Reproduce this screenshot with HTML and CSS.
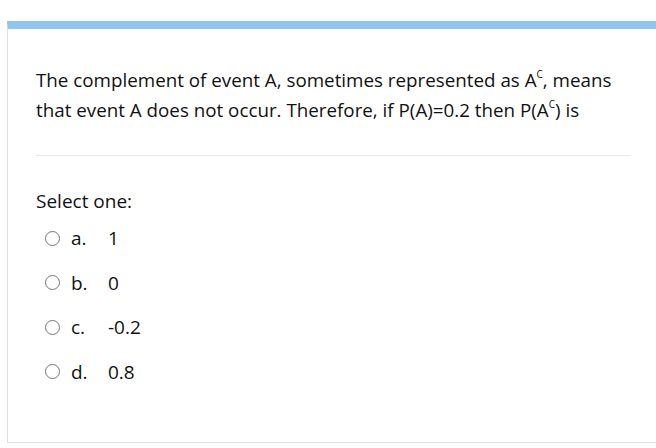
FILE: index.html
```html
<!DOCTYPE html>
<html>
<head>
<meta charset="utf-8">
<link rel="stylesheet" href="styles.css">
</head>
<body>
<div class="card">
  <div class="qtext">
    <p>The complement of event A, sometimes represented as A<sup>C</sup>, means that event A does not occur. Therefore, if P(A)=0.2 then P(A<sup>C</sup>) is</p>
  </div>
  <div class="answers">
    <div class="prompt">Select one:</div>
    <div class="option"><span class="radio"></span><span class="letter">a.</span><span class="val">1</span></div>
    <div class="option"><span class="radio"></span><span class="letter">b.</span><span class="val">0</span></div>
    <div class="option"><span class="radio"></span><span class="letter">c.</span><span class="val">-0.2</span></div>
    <div class="option"><span class="radio"></span><span class="letter">d.</span><span class="val">0.8</span></div>
  </div>
</div>
</body>
</html>
```
FILE: styles.css
```css
html, body {
  margin: 0;
  padding: 0;
  background: #fff;
}
body {
  padding: 21px 0 0 7px;
  font-family: "Open Sans", "Noto Sans", sans-serif;
  color: #111;
  overflow: hidden;
}
.card {
  border: 1px solid #dedede;
  border-top: 8px solid #8fc5f2;
  margin-right: -20px;
  height: 422px;
  box-sizing: border-box;
  padding: 0 44px 0 28px;
}
.qtext {
  padding-top: 36px;
  padding-bottom: 30px;
  border-bottom: 1px solid #e8e8e8;
}
.qtext p {
  margin: 0;
  font-size: 18.8px;
  line-height: 30px;
}
sup {
  font-size: 10px;
  line-height: 0;
  vertical-align: 9px;
}
.answers {
  padding-top: 30px;
  font-size: 19px;
}
.prompt {
  line-height: 30px;
  margin-bottom: 0;
}
.option {
  display: flex;
  align-items: center;
  height: 44.5px;
  padding-left: 9px;
}
.radio {
  box-sizing: border-box;
  width: 15px;
  height: 15px;
  border: 1px solid #767676;
  border-radius: 50%;
  margin-right: 11px;
  flex: none;
}
.letter {
  width: 37px;
}
```
